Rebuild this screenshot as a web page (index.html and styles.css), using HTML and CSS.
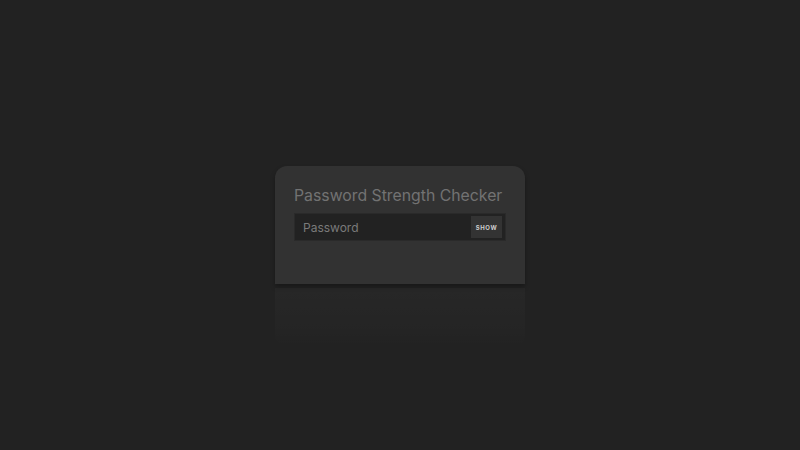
FILE: index.html
```html
<!DOCTYPE html>
<html lang="en">
<head>
<meta charset="utf-8">
<title>Password Strength Checker</title>
<link rel="stylesheet" href="styles.css">
</head>
<body>
  <main class="checker">
    <h1 class="checker-title">Password Strength Checker</h1>
    <div class="field">
      <input class="field-input" type="password" placeholder="Password">
      <button class="field-toggle" type="button">SHOW</button>
    </div>
  </main>
</body>
</html>
```
FILE: styles.css
```css
* {
  box-sizing: border-box;
}

html,
body {
  height: 100%;
}

body {
  margin: 0;
  background: #222222;
  font-family: Inter, "Open Sans", sans-serif;
  display: flex;
  align-items: center;
  justify-content: center;
}

.checker {
  position: relative;
  width: 250px;
  height: 118px;
  padding: 19px 19px 0;
  background: #323232;
  border-radius: 12px 12px 0 0;
  box-shadow: 0 3px 5px rgba(0, 0, 0, 0.3);
}

/* faint floor reflection under the card */
.checker::after {
  content: "";
  position: absolute;
  left: 0;
  right: 0;
  top: calc(100% + 4px);
  height: 58px;
  border-radius: 0 0 10px 10px;
  background: linear-gradient(rgba(255, 255, 255, 0.025), rgba(255, 255, 255, 0.012) 70%, transparent);
}

.checker-title {
  margin: 0 0 7px;
  font-size: 15.8px;
  line-height: 21px;
  font-weight: 400;
  color: #727272;
  white-space: nowrap;
}

.field {
  display: flex;
  align-items: center;
  height: 28px;
  padding: 0 3px 0 8px;
  background: #222222;
  border: 1px solid #2a2a2a;
}

.field-input {
  flex: 1;
  min-width: 0;
  background: transparent;
  border: 0;
  outline: 0;
  padding: 0;
  font-family: inherit;
  font-size: 12px;
  color: #888888;
}

.field-input::placeholder {
  color: #7a7a7a;
}

.field-toggle {
  width: 31px;
  height: 22px;
  padding: 0;
  border: 0;
  background: #333333;
  color: #cfcfcf;
  font-family: inherit;
  font-size: 6px;
  font-weight: 700;
  letter-spacing: 0.6px;
}
```
